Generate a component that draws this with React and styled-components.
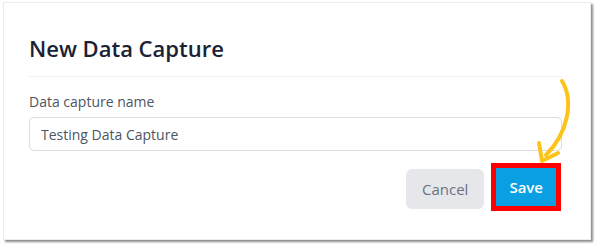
import styled, { createGlobalStyle } from 'styled-components';

const Global = createGlobalStyle`
  html, body { margin: 0; padding: 0; background: #fff; }
  body { font-family: "Open Sans", "Noto Sans", sans-serif; }
`;

const Stage = styled.div`
  width: 600px;
  height: 248px;
  padding: 2px 0 0 3px;
  box-sizing: border-box;
`;

const Dialog = styled.div`
  position: relative;
  width: 588px;
  height: 238px;
  box-sizing: border-box;
  background: #fff;
  border: 1px solid #ececec;
  box-shadow: 2px 2px 2px rgba(0, 0, 0, 0.45);
  padding: 30px 28px 0 25px;
  display: flex;
  flex-direction: column;
`;

const Title = styled.h1`
  margin: 0;
  font-size: 22px;
  font-weight: 600;
  color: #1a2233;
  line-height: 30px;
  padding-bottom: 13px;
  border-bottom: 1px solid #eeeeee;
`;

const Field = styled.label`
  display: flex;
  flex-direction: column;
  gap: 6px;
  margin-top: 15px;
`;

const Label = styled.span`
  font-size: 14px;
  color: #4b5563;
  line-height: 19px;
`;

const Input = styled.input`
  height: 34px;
  box-sizing: border-box;
  border: 1px solid #dcdcdc;
  border-radius: 5px;
  padding: 0 11px;
  font-family: inherit;
  font-size: 14px;
  color: #4b5563;
  outline: none;
`;

const Footer = styled.div`
  display: flex;
  justify-content: flex-end;
  align-items: flex-start;
  gap: 7px;
  margin-top: 18px;
  padding-right: 1px;
`;

const Button = styled.button`
  height: ${p => (p.$primary ? '38px' : '40px')};
  border: none;
  border-radius: ${p => (p.$primary ? '0' : '6px')};
  padding: 0 ${p => (p.$primary ? '13px' : '16px')};
  font-family: inherit;
  font-size: 15px;
  font-weight: ${p => (p.$primary ? 600 : 400)};
  background: ${p => (p.$primary ? '#0a9fe3' : '#e5e7eb')};
  color: ${p => (p.$primary ? '#fff' : '#6b7280')};
`;

const Highlight = styled.div`
  border: 5px solid #ff0000;
  display: flex;
  margin-top: -6px;
`;

const Arrow = styled.svg`
  position: absolute;
  left: 530px;
  top: 74px;
  overflow: visible;
`;

export default function App() {
  return (
    <>
      <Global />
      <Stage>
        <Dialog>
          <Title>New Data Capture</Title>
          <Field>
            <Label>Data capture name</Label>
            <Input defaultValue="Testing Data Capture" />
          </Field>
          <Footer>
            <Button>Cancel</Button>
            <Highlight>
              <Button $primary>Save</Button>
            </Highlight>
          </Footer>
          <Arrow width="40" height="90" viewBox="0 0 40 90">
            <path d="M28 4 C40 24 34 56 12 78" fill="none" stroke="#fcc419" strokeWidth="4" strokeLinecap="round" />
            <path d="M5 66 L8 84 L24 76" fill="none" stroke="#fcc419" strokeWidth="4" strokeLinecap="round" strokeLinejoin="round" />
          </Arrow>
        </Dialog>
      </Stage>
    </>
  );
}
